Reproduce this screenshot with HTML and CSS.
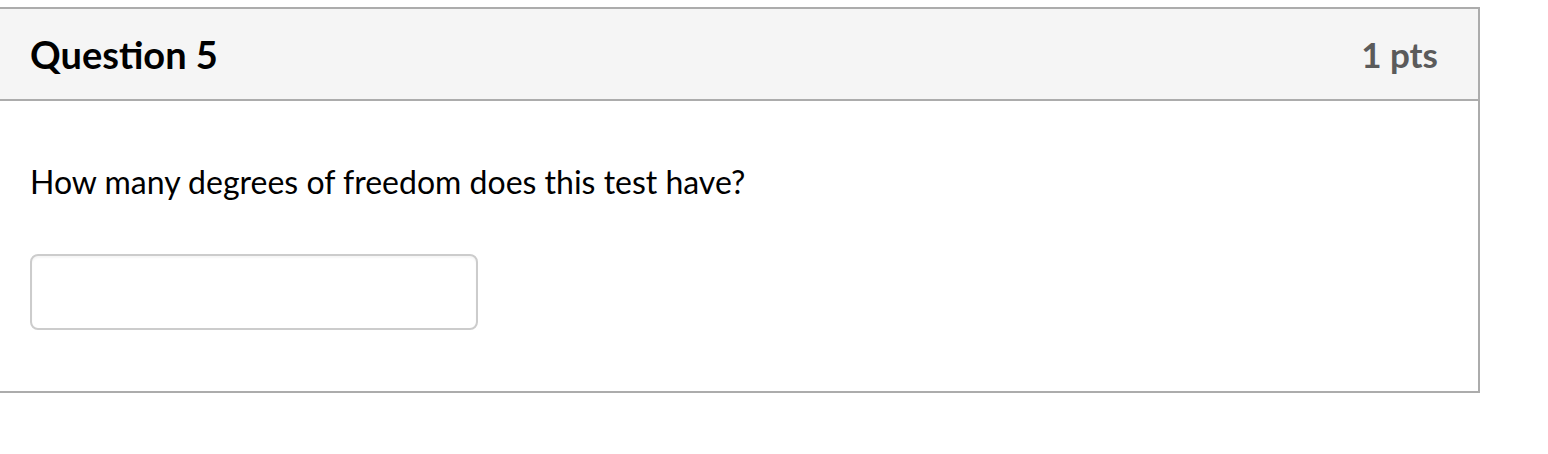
FILE: index.html
```html
<!DOCTYPE html>
<html lang="en">
<head>
<meta charset="utf-8">
<title>Question 5</title>
<link rel="stylesheet" href="styles.css">
</head>
<body>
<div class="page">
  <div class="question">
    <div class="question-header">
      <h2 class="question-title">Question 5</h2>
      <span class="question-points">1 pts</span>
    </div>
    <div class="question-body">
      <p class="question-text">How many degrees of freedom does this test have?</p>
      <input class="answer-input" type="text" aria-label="Answer">
    </div>
  </div>
</div>
</body>
</html>
```

FILE: styles.css
```css
html, body {
  margin: 0;
  padding: 0;
  background: #ffffff;
}

body {
  font-family: Lato, "Noto Sans", "Liberation Sans", sans-serif;
  color: #000000;
}

.page {
  padding-top: 7px;
  width: 1480px;
}

.question {
  border: 2px solid #acacac;
  border-left: none;
  background: #ffffff;
}

.question-header {
  display: flex;
  align-items: center;
  justify-content: space-between;
  height: 90px;
  padding: 0 40px 0 30px;
  background: #f5f5f5;
  border-bottom: 2px solid #acacac;
}

.question-title {
  margin: 0;
  font-size: 38px;
  font-weight: 700;
  line-height: 1;
  color: #000000;
}

.question-points {
  font-size: 35px;
  font-weight: 700;
  line-height: 1;
  color: #5b5b5b;
}

.question-body {
  padding: 57px 30px 61px 30px;
}

.question-text {
  margin: 0 0 48px 0;
  font-size: 32px;
  line-height: 48px;
}

.answer-input {
  display: block;
  box-sizing: border-box;
  width: 448px;
  height: 76px;
  margin: 0;
  border: 2px solid #cccccc;
  border-radius: 8px;
  background: #ffffff;
  box-shadow: inset 0 2px 2px rgba(0, 0, 0, 0.04);
  font-family: inherit;
  font-size: 32px;
}
```
